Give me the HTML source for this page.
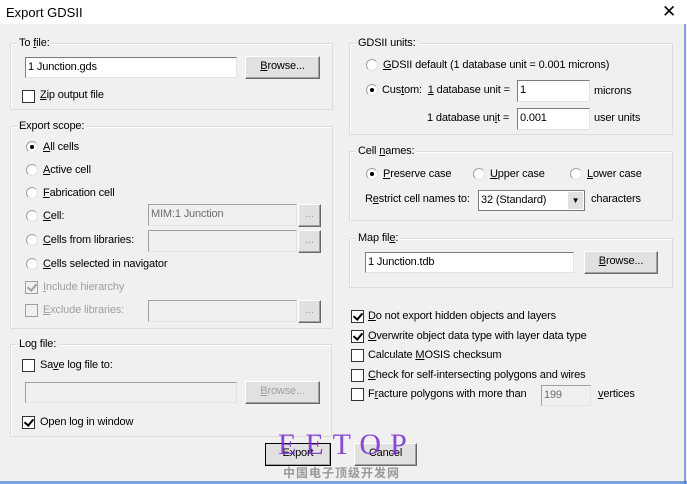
<!DOCTYPE html><html><head><style>
*{margin:0;padding:0;box-sizing:border-box}
body{width:687px;height:484px;background:#f0f0f0;font:11px "Liberation Sans",sans-serif;letter-spacing:-0.15px;color:#000;position:relative;overflow:hidden}
.a{position:absolute;white-space:nowrap}
.tb{position:absolute;left:0;top:0;width:687px;height:24px;background:#fff}
.g{position:absolute;border:1px solid #dcdcdc;box-shadow:inset 1px 1px 0 #fff}
.gl{position:absolute;background:#f0f0f0;padding:0 2px;top:-8px;left:6px;line-height:14px}
.in{position:absolute;background:#fff;border:1px solid #7a7a7a;border-right-color:#e3e3e3;border-bottom-color:#e3e3e3;padding:1px 2px;line-height:16px}
.in.d{background:#f0f0f0;color:#6d6d6d;border-color:#a0a0a0 #e3e3e3 #e3e3e3 #a0a0a0}
.bt{position:absolute;background:#e1e1e1;border:1px solid #fff;border-right-color:#696969;border-bottom-color:#696969;box-shadow:inset -1px -1px 0 #a0a0a0;text-align:center;line-height:19px}
.bt.d{color:#a0a0a0}
.r{position:absolute;width:12px;height:12px;border-radius:50%;background:#fff;border:1px solid #a0a0a0;border-right-color:#e3e3e3;border-bottom-color:#e3e3e3}
.r.on:after{content:"";position:absolute;left:3px;top:3px;width:4px;height:4px;border-radius:50%;background:#000}
.c{position:absolute;width:13px;height:13px;background:#fff;border:1px solid #333}
.c.d{border-color:#a0a0a0;background:#f0f0f0}
.c.on:after{content:"";position:absolute;left:3px;top:0px;width:4px;height:7px;border:solid #000;border-width:0 2px 2px 0;transform:rotate(40deg)}
.c.d.on:after{border-color:#a0a0a0}
.gr{color:#a0a0a0}
u{text-decoration:underline}
</style></head><body>
<div class="tb"></div>
<div class="a" style="left:6px;top:5px;font-size:13px;letter-spacing:0">Export GDSII</div>
<div class="a" style="left:662px;top:2px;font-size:17px">✕</div>
<div class="a" style="left:684px;top:24px;width:2px;height:460px;background:#2b6ed6;opacity:.6"></div>
<div class="a" style="left:0;top:481px;width:687px;height:3px;background:#2b6ed6;opacity:.6"></div>

<div class="g" style="left:10px;top:43px;width:323px;height:67px"><div class="gl">To <u>f</u>ile:</div></div>
<div class="in" style="left:25px;top:57px;width:212px;height:21px">1 Junction.gds</div>
<div class="bt" style="left:245px;top:56px;width:75px;height:23px"><u>B</u>rowse...</div>
<div class="c" style="left:22px;top:90px"></div><div class="a" style="left:40px;top:89px"><u>Z</u>ip output file</div>

<div class="g" style="left:10px;top:126px;width:323px;height:203px"><div class="gl">Export scope:</div></div>
<div class="r on" style="left:26px;top:141px"></div><div class="a" style="left:43px;top:141px"><u>A</u>ll cells</div>
<div class="r" style="left:26px;top:164px"></div><div class="a" style="left:43px;top:164px"><u>A</u>ctive cell</div>
<div class="r" style="left:26px;top:187px"></div><div class="a" style="left:43px;top:187px"><u>F</u>abrication cell</div>
<div class="r" style="left:26px;top:210px"></div><div class="a" style="left:43px;top:210px"><u>C</u>ell:</div>
<div class="in d" style="left:148px;top:204px;width:149px;height:22px">MIM:1 Junction</div>
<div class="bt d" style="left:298px;top:204px;width:23px;height:23px">...</div>
<div class="r" style="left:26px;top:234px"></div><div class="a" style="left:43px;top:234px"><u>C</u>ells from libraries:</div>
<div class="in d" style="left:148px;top:230px;width:149px;height:22px"></div>
<div class="bt d" style="left:298px;top:230px;width:23px;height:23px">...</div>
<div class="r" style="left:26px;top:258px"></div><div class="a" style="left:43px;top:258px"><u>C</u>ells selected in navigator</div>
<div class="c d on" style="left:25px;top:281px"></div><div class="a gr" style="left:43px;top:281px"><u>I</u>nclude hierarchy</div>
<div class="c d" style="left:25px;top:304px"></div><div class="a gr" style="left:43px;top:304px"><u>E</u>xclude libraries:</div>
<div class="in d" style="left:148px;top:300px;width:149px;height:22px"></div>
<div class="bt d" style="left:298px;top:300px;width:23px;height:23px">...</div>

<div class="g" style="left:10px;top:344px;width:322px;height:93px"><div class="gl">Log file:</div></div>
<div class="c" style="left:22px;top:359px"></div><div class="a" style="left:40px;top:359px">Sa<u>v</u>e log file to:</div>
<div class="in d" style="left:25px;top:382px;width:212px;height:21px"></div>
<div class="bt d" style="left:245px;top:381px;width:75px;height:23px"><u>B</u>rowse...</div>
<div class="c on" style="left:22px;top:416px"></div><div class="a" style="left:40px;top:416px">Open log in window</div>

<div class="g" style="left:349px;top:43px;width:324px;height:92px"><div class="gl">GDSII units:</div></div>
<div class="r" style="left:366px;top:59px"></div><div class="a" style="left:383px;top:59px"><u>G</u>DSII default (1 database unit = 0.001 microns)</div>
<div class="r on" style="left:366px;top:84px"></div><div class="a" style="left:382px;top:84px">Cus<u>t</u>om:&nbsp; <u>1</u> database unit =</div>
<div class="in" style="left:517px;top:80px;width:73px;height:22px">1</div><div class="a" style="left:594px;top:85px">microns</div>
<div class="a" style="left:427px;top:112px">1 database un<u>i</u>t =</div>
<div class="in" style="left:517px;top:108px;width:73px;height:22px">0.001</div><div class="a" style="left:594px;top:112px">user units</div>

<div class="g" style="left:349px;top:151px;width:324px;height:70px"><div class="gl">Cell <u>n</u>ames:</div></div>
<div class="r on" style="left:366px;top:168px"></div><div class="a" style="left:383px;top:168px"><u>P</u>reserve case</div>
<div class="r" style="left:473px;top:168px"></div><div class="a" style="left:490px;top:168px"><u>U</u>pper case</div>
<div class="r" style="left:570px;top:168px"></div><div class="a" style="left:587px;top:168px"><u>L</u>ower case</div>
<div class="a" style="left:365px;top:193px">R<u>e</u>strict cell names to:</div>
<div class="in" style="left:478px;top:190px;width:107px;height:21px;border:1px solid #7a7a7a">32 (Standard)</div>
<div class="a" style="left:568px;top:192px;width:15px;height:17px;background:#e1e1e1;text-align:center;font-size:8px;line-height:17px">▼</div>
<div class="a" style="left:591px;top:193px">characters</div>

<div class="g" style="left:349px;top:238px;width:324px;height:50px"><div class="gl">Map fil<u>e</u>:</div></div>
<div class="in" style="left:365px;top:252px;width:209px;height:21px">1 Junction.tdb</div>
<div class="bt" style="left:584px;top:251px;width:74px;height:23px"><u>B</u>rowse...</div>

<div class="c on" style="left:351px;top:310px"></div><div class="a" style="left:368px;top:310px"><u>D</u>o not export hidden objects and layers</div>
<div class="c on" style="left:351px;top:330px"></div><div class="a" style="left:368px;top:330px"><u>O</u>verwrite object data type with layer data type</div>
<div class="c" style="left:351px;top:349px"></div><div class="a" style="left:368px;top:349px">Calculate <u>M</u>OSIS checksum</div>
<div class="c" style="left:351px;top:369px"></div><div class="a" style="left:368px;top:369px"><u>C</u>heck for self-intersecting polygons and wires</div>
<div class="c" style="left:351px;top:388px"></div><div class="a" style="left:368px;top:388px">F<u>r</u>acture polygons with more than</div>
<div class="in d" style="left:541px;top:385px;width:50px;height:21px">199</div><div class="a" style="left:598px;top:388px"><u>v</u>ertices</div>

<div class="bt" style="left:265px;top:443px;width:66px;height:23px;border:1px solid #000">Export</div>
<div class="bt" style="left:354px;top:443px;width:63px;height:23px">Cancel</div>
<div class="a" style="left:278px;top:428px;font:30px 'Liberation Serif',serif;color:#7a2bd0;letter-spacing:9px;opacity:.85">EETOP</div>
<div class="a" style="left:283px;top:464px;font:bold 12px 'Noto Sans CJK SC',sans-serif;color:#999;letter-spacing:1px">中国电子顶级开发网</div>
</body></html>
